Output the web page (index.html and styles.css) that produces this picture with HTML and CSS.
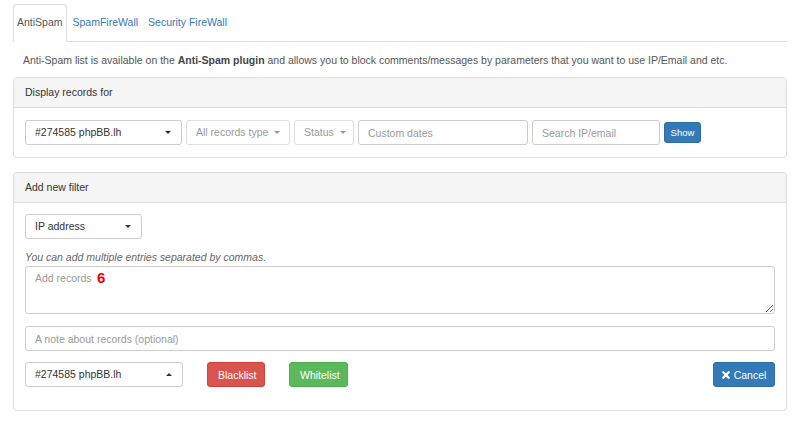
FILE: index.html
```
<!DOCTYPE html>
<html lang="en">
<head>
  <meta charset="UTF-8">
  <title>Black &amp; White lists</title>
  <link rel="stylesheet" href="styles.css">
</head>
<body>
  <div class="page">
    <ul class="nav-tabs">
      <li class="tab active"><a>AntiSpam</a></li>
      <li class="tab"><a>SpamFireWall</a></li>
      <li class="tab"><a>Security FireWall</a></li>
    </ul>

    <p class="intro">Anti-Spam list is available on the <b>Anti-Spam plugin</b> and allows you to block comments/messages by parameters that you want to use IP/Email and etc.</p>

    <div class="panel">
      <div class="panel-heading">Display records for</div>
      <div class="panel-body filters">
        <div class="select select-site select-first">#274585 phpBB.lh<span class="caret"></span></div>
        <div class="select select-muted select-type">All records type<span class="caret caret-inline"></span></div>
        <div class="select select-muted select-status">Status<span class="caret caret-inline"></span></div>
        <input class="form-input input-dates" type="text" placeholder="Custom dates">
        <input class="form-input input-search" type="text" placeholder="Search IP/email">
        <button class="btn btn-sm btn-primary">Show</button>
      </div>
    </div>

    <div class="panel">
      <div class="panel-heading">Add new filter</div>
      <div class="panel-body panel-body-form">
        <div class="select select-kind">IP address<span class="caret"></span></div>
        <p class="help">You can add multiple entries separated by commas.</p>
        <div class="records">
          <textarea class="form-input records-input" placeholder="Add records"></textarea>
          <span class="marker">6</span>
        </div>
        <input class="form-input note-input" type="text" placeholder="A note about records (optional)">
        <div class="actions">
          <div class="select select-site">#274585 phpBB.lh<span class="caret caret-up"></span></div>
          <button class="btn btn-danger">Blacklist</button>
          <button class="btn btn-success">Whitelist</button>
          <button class="btn btn-primary btn-cancel">
            <svg width="8" height="8" viewBox="0 0 10 10"><path d="M1.6 1.6 L8.4 8.4 M8.4 1.6 L1.6 8.4" stroke="#fff" stroke-width="2.8" stroke-linecap="round"/></svg>
            Cancel
          </button>
        </div>
      </div>
    </div>
  </div>
</body>
</html>
```

FILE: styles.css
```
body {
  margin: 0;
  padding: 0;
  font-family: "Liberation Sans", Arial, sans-serif;
  font-size: 10.5px;
  color: #333;
  background: #fff;
}

.page {
  padding: 4px 13px 0;
}

.nav-tabs {
  list-style: none;
  margin: 0;
  padding: 0;
  display: flex;
  border-bottom: 1px solid #ddd;
}

.tab {
  margin-right: 2px;
  margin-bottom: -1px;
}

.tab a {
  display: block;
  padding: 11px 3px 12px;
  line-height: 13px;
  color: #337ab7;
  border: 1px solid transparent;
  border-radius: 4px 4px 0 0;
}

.tab.active a {
  color: #555;
  background: #fff;
  border-color: #ddd #ddd transparent;
}

.intro {
  margin: 0;
  padding: 12px 10px 10px;
  line-height: 13px;
  color: #555;
}

.intro b {
  color: #444;
}

.panel {
  border: 1px solid #ddd;
  border-radius: 4px;
  margin-bottom: 14px;
  background: #fff;
}

.panel-heading {
  background: #f5f5f5;
  border-bottom: 1px solid #ddd;
  border-radius: 3px 3px 0 0;
  padding: 8px 11px;
  line-height: 13px;
}

.panel-body {
  padding: 12px 11px;
}

.panel-body-form {
  padding-top: 11px;
}

.filters {
  display: flex;
  align-items: center;
  gap: 4px;
}

.select {
  position: relative;
  box-sizing: border-box;
  height: 25px;
  line-height: 23px;
  padding: 0 9px;
  border: 1px solid #ccc;
  border-radius: 3px;
  background: #fff;
  color: #333;
  white-space: nowrap;
  flex-shrink: 0;
}

.select-muted {
  color: #999;
  border-color: #ddd;
}

.select-site {
  width: 158px;
}

.select-first {
  width: 157px;
}

.select-type {
  width: 104px;
}

.select-status {
  width: 60px;
}

.select-kind {
  width: 117px;
}

.caret {
  position: absolute;
  right: 10px;
  top: 10px;
  width: 0;
  height: 0;
  border-left: 3px solid transparent;
  border-right: 3px solid transparent;
  border-top: 3px solid #333;
}

.caret-inline {
  position: static;
  display: inline-block;
  vertical-align: middle;
  margin-left: 6px;
  margin-top: -1px;
}

.select-muted .caret {
  border-top-color: #999;
}

.caret-up {
  border-top: none;
  border-bottom: 3px solid #333;
}

.form-input {
  box-sizing: border-box;
  height: 25px;
  padding: 0 9px;
  border: 1px solid #ccc;
  border-radius: 3px;
  font-family: "Liberation Sans", Arial, sans-serif;
  font-size: 10.5px;
  color: #333;
  outline: none;
}

.form-input::placeholder {
  color: #999;
}

.input-dates {
  width: 170px;
}

.input-search {
  width: 128px;
}

.btn {
  box-sizing: border-box;
  height: 25px;
  padding: 0 10px;
  border: 1px solid transparent;
  border-radius: 3px;
  font-family: "Liberation Sans", Arial, sans-serif;
  font-size: 10.5px;
  color: #fff;
}

.btn-sm {
  height: 21px;
  width: 37px;
  padding: 0;
  font-size: 9.5px;
}

.btn-primary {
  background: #337ab7;
  border-color: #2e6da4;
}

.btn-danger {
  background: #d9534f;
  border-color: #d43f3a;
  width: 58px;
}

.btn-success {
  background: #5cb85c;
  border-color: #4cae4c;
  width: 59px;
}

.help {
  margin: 12px 0 2px;
  font-style: italic;
  color: #666;
  line-height: 13px;
}

.records {
  position: relative;
}

.records-input {
  display: block;
  width: 100%;
  height: 48px;
  padding: 5px 9px;
  line-height: 13px;
  resize: vertical;
}

.marker {
  position: absolute;
  left: 72px;
  top: 3px;
  color: #e00;
  font-weight: bold;
  font-size: 15px;
}

.note-input {
  display: block;
  width: 100%;
  margin-top: 12px;
}

.actions {
  display: flex;
  align-items: center;
  gap: 24px;
  margin-top: 11px;
  margin-bottom: 11px;
}

.btn-cancel {
  margin-left: auto;
  width: 62px;
  display: flex;
  align-items: center;
  justify-content: center;
  gap: 4px;
  padding: 0;
}
```
